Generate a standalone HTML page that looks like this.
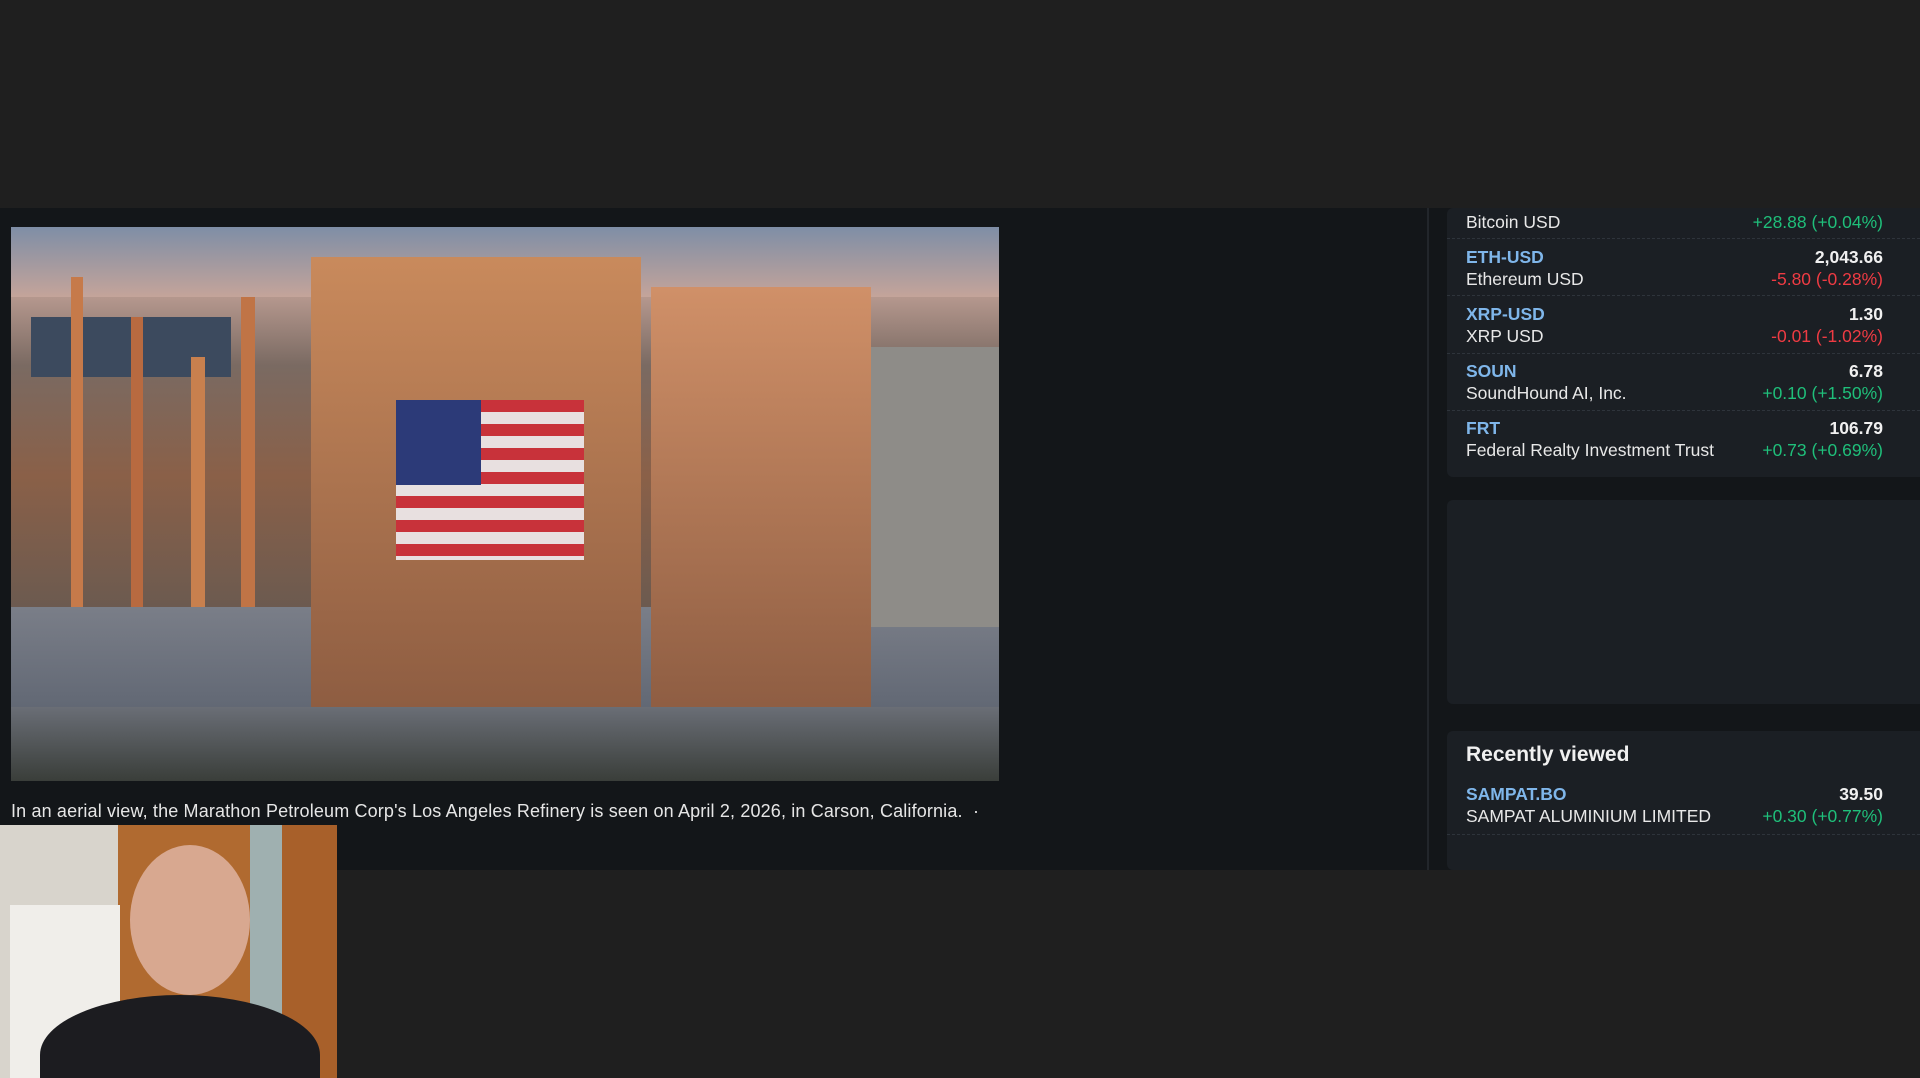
<!DOCTYPE html>
<html><head><meta charset="utf-8"><style>
*{margin:0;padding:0;box-sizing:border-box}
body{width:1920px;height:1078px;background:#1f1f1f;position:relative;overflow:hidden;font-family:"Liberation Sans",sans-serif}
.band{position:absolute;left:0;top:208px;width:1920px;height:662px;background:#131619}
.div{position:absolute;left:1427px;top:208px;width:2px;height:662px;background:#22262b}
.img{position:absolute;left:11px;top:227px;width:988px;height:554px;overflow:hidden;background:linear-gradient(180deg,#8a96a8 0%,#b89a90 12%,#7a6a62 25%,#8a6048 45%,#6a5a50 70%,#4a4a48 100%)}
.cap{position:absolute;left:11px;top:801px;color:#e6e6e6;font-size:18px;letter-spacing:0.15px}
.cam{position:absolute;left:0;top:825px;width:337px;height:253px;background:linear-gradient(90deg,#d8d4cc 0 118px,#b06a30 118px 250px,#9fb0b0 250px 282px,#a8602a 282px 337px);overflow:hidden}
.card{position:absolute;left:1447px;width:473px;background:#1b1f24;border-radius:6px 0 0 6px}
.row{position:absolute;left:1466px;width:417px;height:57px;font-size:17.5px;line-height:22px}
.row .t{color:#7fb6ea;font-weight:bold}
.row .n{color:#e8e8e8}
.row .r{position:absolute;right:0;top:0;text-align:right}
.p{color:#f0f0f0;font-weight:bold}
.g{color:#1fbf7a}.rd{color:#ef3b43}
.sep{position:absolute;left:1447px;width:473px;border-top:1px dashed #2e343b}
</style></head><body>
<div class="band"></div>
<div class="div"></div>
<div class="img">
 <div style="position:absolute;left:0;top:0;width:988px;height:70px;background:linear-gradient(180deg,#7e8ea6,#c4a49a)"></div>
 <div style="position:absolute;left:20px;top:90px;width:200px;height:60px;background:#3c4a5e"></div>
 <div style="position:absolute;left:60px;top:50px;width:12px;height:460px;background:#c67a4a"></div>
 <div style="position:absolute;left:120px;top:90px;width:12px;height:420px;background:#b86a40"></div>
 <div style="position:absolute;left:180px;top:130px;width:14px;height:380px;background:#c8804e"></div>
 <div style="position:absolute;left:230px;top:70px;width:14px;height:440px;background:#c07446"></div>
 <div style="position:absolute;left:0;top:380px;width:988px;height:174px;background:linear-gradient(180deg,#7a7e88,#505866)"></div>
 <div style="position:absolute;left:300px;top:30px;width:330px;height:480px;background:linear-gradient(180deg,#c98a5c,#8a5a40)"></div>
 <div style="position:absolute;left:385px;top:173px;width:188px;height:160px;background:repeating-linear-gradient(180deg,#c8323a 0 12px,#e8e0e0 12px 24px)"></div>
 <div style="position:absolute;left:385px;top:173px;width:85px;height:85px;background:#2c3a78"></div>
 <div style="position:absolute;left:640px;top:60px;width:220px;height:450px;background:linear-gradient(180deg,#d09068,#8a5a40)"></div>
 <div style="position:absolute;left:860px;top:120px;width:128px;height:280px;background:#8e8c88"></div>
 <div style="position:absolute;left:0;top:480px;width:988px;height:74px;background:linear-gradient(180deg,#6a6e76,#3a3e3a)"></div>
</div>
<div class="cap">In an aerial view, the Marathon Petroleum Corp's Los Angeles Refinery is seen on April 2, 2026, in Carson, California. &nbsp;·</div>
<div class="cam">
 <div style="position:absolute;left:10px;top:80px;width:110px;height:173px;background:#f0eeea"></div>
 <div style="position:absolute;left:130px;top:20px;width:120px;height:150px;border-radius:50%;background:#d8a890"></div>
 <div style="position:absolute;left:40px;top:170px;width:280px;height:120px;border-radius:50% 50% 0 0;background:#1c1c20"></div>
</div>

<div class="card" style="top:208px;height:269px"></div>
<div class="card" style="top:500px;height:204px"></div>
<div class="card" style="top:731px;height:139px"></div>

<div class="row" style="top:211px"><div class="n">Bitcoin USD</div><div class="r"><div class="g">+28.88 (+0.04%)</div></div></div>
<div class="sep" style="top:238px"></div>
<div class="row" style="top:246px"><div class="t">ETH-USD</div><div class="n">Ethereum USD</div><div class="r"><div class="p">2,043.66</div><div class="rd">-5.80 (-0.28%)</div></div></div>
<div class="sep" style="top:295px"></div>
<div class="row" style="top:303px"><div class="t">XRP-USD</div><div class="n">XRP USD</div><div class="r"><div class="p">1.30</div><div class="rd">-0.01 (-1.02%)</div></div></div>
<div class="sep" style="top:353px"></div>
<div class="row" style="top:360px"><div class="t">SOUN</div><div class="n">SoundHound AI, Inc.</div><div class="r"><div class="p">6.78</div><div class="g">+0.10 (+1.50%)</div></div></div>
<div class="sep" style="top:410px"></div>
<div class="row" style="top:417px"><div class="t">FRT</div><div class="n">Federal Realty Investment Trust</div><div class="r"><div class="p">106.79</div><div class="g">+0.73 (+0.69%)</div></div></div>

<div style="position:absolute;left:1466px;top:743px;color:#f0f0f0;font-size:21px;font-weight:bold">Recently viewed</div>
<div class="row" style="top:783px"><div class="t">SAMPAT.BO</div><div class="n">SAMPAT ALUMINIUM LIMITED</div><div class="r"><div class="p">39.50</div><div class="g">+0.30 (+0.77%)</div></div></div>
<div class="sep" style="top:834px"></div>
</body></html>
